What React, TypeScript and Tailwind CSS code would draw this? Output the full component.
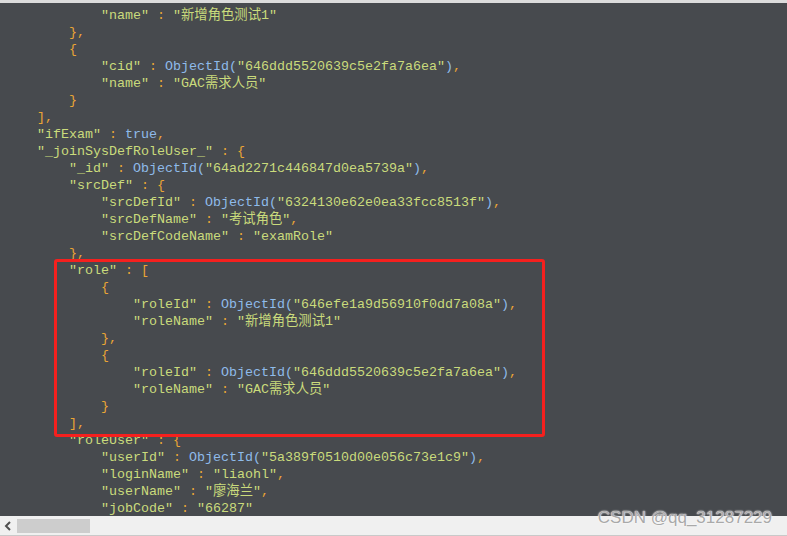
type Val =
  | { s: string }
  | { oid: string }
  | { b: string }
  | { p: string };

interface Line {
  i: number;
  k?: string;
  v?: Val;
  t?: string;
}

const lines: Line[] = [
  { i: 3, k: 'name', v: { s: '新增角色测试1' } },
  { i: 2, t: '},' },
  { i: 2, t: '{' },
  { i: 3, k: 'cid', v: { oid: '646ddd5520639c5e2fa7a6ea' }, t: ',' },
  { i: 3, k: 'name', v: { s: 'GAC需求人员' } },
  { i: 2, t: '}' },
  { i: 1, t: '],' },
  { i: 1, k: 'ifExam', v: { b: 'true' }, t: ',' },
  { i: 1, k: '_joinSysDefRoleUser_', v: { p: '{' } },
  { i: 2, k: '_id', v: { oid: '64ad2271c446847d0ea5739a' }, t: ',' },
  { i: 2, k: 'srcDef', v: { p: '{' } },
  { i: 3, k: 'srcDefId', v: { oid: '6324130e62e0ea33fcc8513f' }, t: ',' },
  { i: 3, k: 'srcDefName', v: { s: '考试角色' }, t: ',' },
  { i: 3, k: 'srcDefCodeName', v: { s: 'examRole' } },
  { i: 2, t: '},' },
  { i: 2, k: 'role', v: { p: '[' } },
  { i: 3, t: '{' },
  { i: 4, k: 'roleId', v: { oid: '646efe1a9d56910f0dd7a08a' }, t: ',' },
  { i: 4, k: 'roleName', v: { s: '新增角色测试1' } },
  { i: 3, t: '},' },
  { i: 3, t: '{' },
  { i: 4, k: 'roleId', v: { oid: '646ddd5520639c5e2fa7a6ea' }, t: ',' },
  { i: 4, k: 'roleName', v: { s: 'GAC需求人员' } },
  { i: 3, t: '}' },
  { i: 2, t: '],' },
  { i: 2, k: 'roleUser', v: { p: '{' } },
  { i: 3, k: 'userId', v: { oid: '5a389f0510d00e056c73e1c9' }, t: ',' },
  { i: 3, k: 'loginName', v: { s: 'liaohl' }, t: ',' },
  { i: 3, k: 'userName', v: { s: '廖海兰' }, t: ',' },
  { i: 3, k: 'jobCode', v: { s: '66287' } },
];

const GREEN = 'text-[#cadb7c]';
const ORANGE = 'text-[#eaa535]';
const BLUE = 'text-[#8fbbea]';

function Value({ v }: { v: Val }) {
  if ('s' in v) return <span className={GREEN}>"{v.s}"</span>;
  if ('b' in v) return <span className={BLUE}>{v.b}</span>;
  if ('p' in v) return <span className={ORANGE}>{v.p}</span>;
  return (
    <>
      <span className={BLUE}>ObjectId(</span>
      <span className={GREEN}>"{v.oid}"</span>
      <span className={BLUE}>)</span>
    </>
  );
}

function CodeLine({ line }: { line: Line }) {
  return (
    <div className="h-[17px] leading-[17px] whitespace-pre" style={{ paddingLeft: line.i * 32 }}>
      {line.k && (
        <>
          <span className={GREEN}>"{line.k}"</span>
          <span className={ORANGE}> : </span>
        </>
      )}
      {line.v && <Value v={line.v} />}
      {line.t && <span className={ORANGE}>{line.t}</span>}
    </div>
  );
}

export default function App() {
  return (
    <div className="w-[787px] h-[536px] flex flex-col bg-[#f0f0f0] overflow-hidden">
      <div className="h-[3px] bg-[#dcdcdc]" />
      <div className="relative flex-1 bg-[#474a4e] overflow-hidden">
        <div
          className="pl-[5px] pt-[4px] text-[13.33px]"
          style={{ fontFamily: '"Liberation Mono", "Noto Sans CJK SC", monospace' }}
        >
          {lines.map((l, idx) => (
            <CodeLine key={idx} line={l} />
          ))}
        </div>
        <div className="absolute left-[54px] top-[256px] w-[491px] h-[178px] border-[3px] border-[#f5201e] rounded-[3px]" />
      </div>
      <div className="relative h-[20px] flex items-center bg-[#f0f0f0] border-b border-[#c9c9c9]">
        <svg width="17" height="20" viewBox="0 0 17 20" className="shrink-0">
          <path d="M10 6 L6 10 L10 14" fill="none" stroke="#505050" strokeWidth="2" />
        </svg>
        <div className="w-[73px] h-[14px] bg-[#cdcdcd]" />
        <div
          className="absolute right-[15px] bottom-[7px] text-[17px] leading-[20px] text-[#a9a9a9] [text-shadow:0_0_2px_#ffffff,0_0_1px_#ffffff]"
          style={{ fontFamily: '"Liberation Sans", Arial, sans-serif' }}
        >
          CSDN @qq_31287229
        </div>
      </div>
    </div>
  );
}
